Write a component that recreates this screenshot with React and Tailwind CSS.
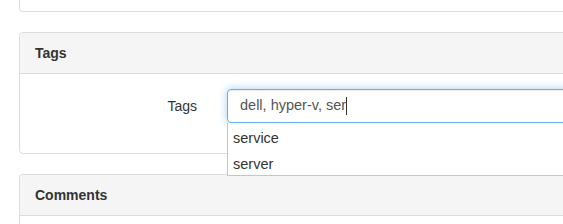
export default function App() {
  return (
    <div
      className="w-[563px] h-[224px] overflow-hidden bg-white text-[14px] text-[#333]"
      style={{ fontFamily: '"Liberation Sans", Arial, sans-serif' }}
    >
      <div className="pl-[19px] w-[800px]">
        {/* previous panel, cut off */}
        <div className="h-[12px] border border-t-0 border-[#ddd] rounded-b-[4px] mb-[20px]" />

        {/* Tags panel */}
        <div className="border border-[#ddd] rounded-[4px] mb-[20px]">
          <div className="bg-[#f5f5f5] border-b border-[#ddd] rounded-t-[4px] px-[15px] h-[41px] flex items-center font-bold">
            Tags
          </div>
          <div className="px-[15px] pt-[15px] pb-[15px]">
            <div className="flex items-start mb-[15px]">
              <label className="w-[192px] shrink-0 text-right pt-[7px] pr-[30px] leading-[20px]">
                Tags
              </label>
              <div className="relative w-[500px]">
                <div className="h-[34px] border border-[#66afe9] rounded-[4px] px-[12px] flex items-center text-[#555] text-[14.5px] shadow-[inset_0_1px_1px_rgba(0,0,0,.075),0_0_8px_rgba(102,175,233,.6)]">
                  <span>dell, hyper-v, ser</span>
                  <span className="w-px h-[18px] bg-[#333]" />
                </div>
                <div className="absolute left-0 top-[34px] w-full bg-white border border-[#c5c5c5] border-t-0 z-10 text-[14.5px] text-[#333]">
                  <div className="h-[26px] leading-[26px] px-[5px] pt-[2px]">service</div>
                  <div className="h-[26px] leading-[26px] px-[5px] pt-[2px]">server</div>
                </div>
              </div>
            </div>
          </div>
        </div>

        {/* Comments panel */}
        <div className="border border-[#ddd] rounded-[4px] h-[80px]">
          <div className="bg-[#f5f5f5] border-b border-[#ddd] rounded-t-[4px] px-[15px] h-[41px] flex items-center font-bold">
            Comments
          </div>
        </div>
      </div>
    </div>
  );
}
